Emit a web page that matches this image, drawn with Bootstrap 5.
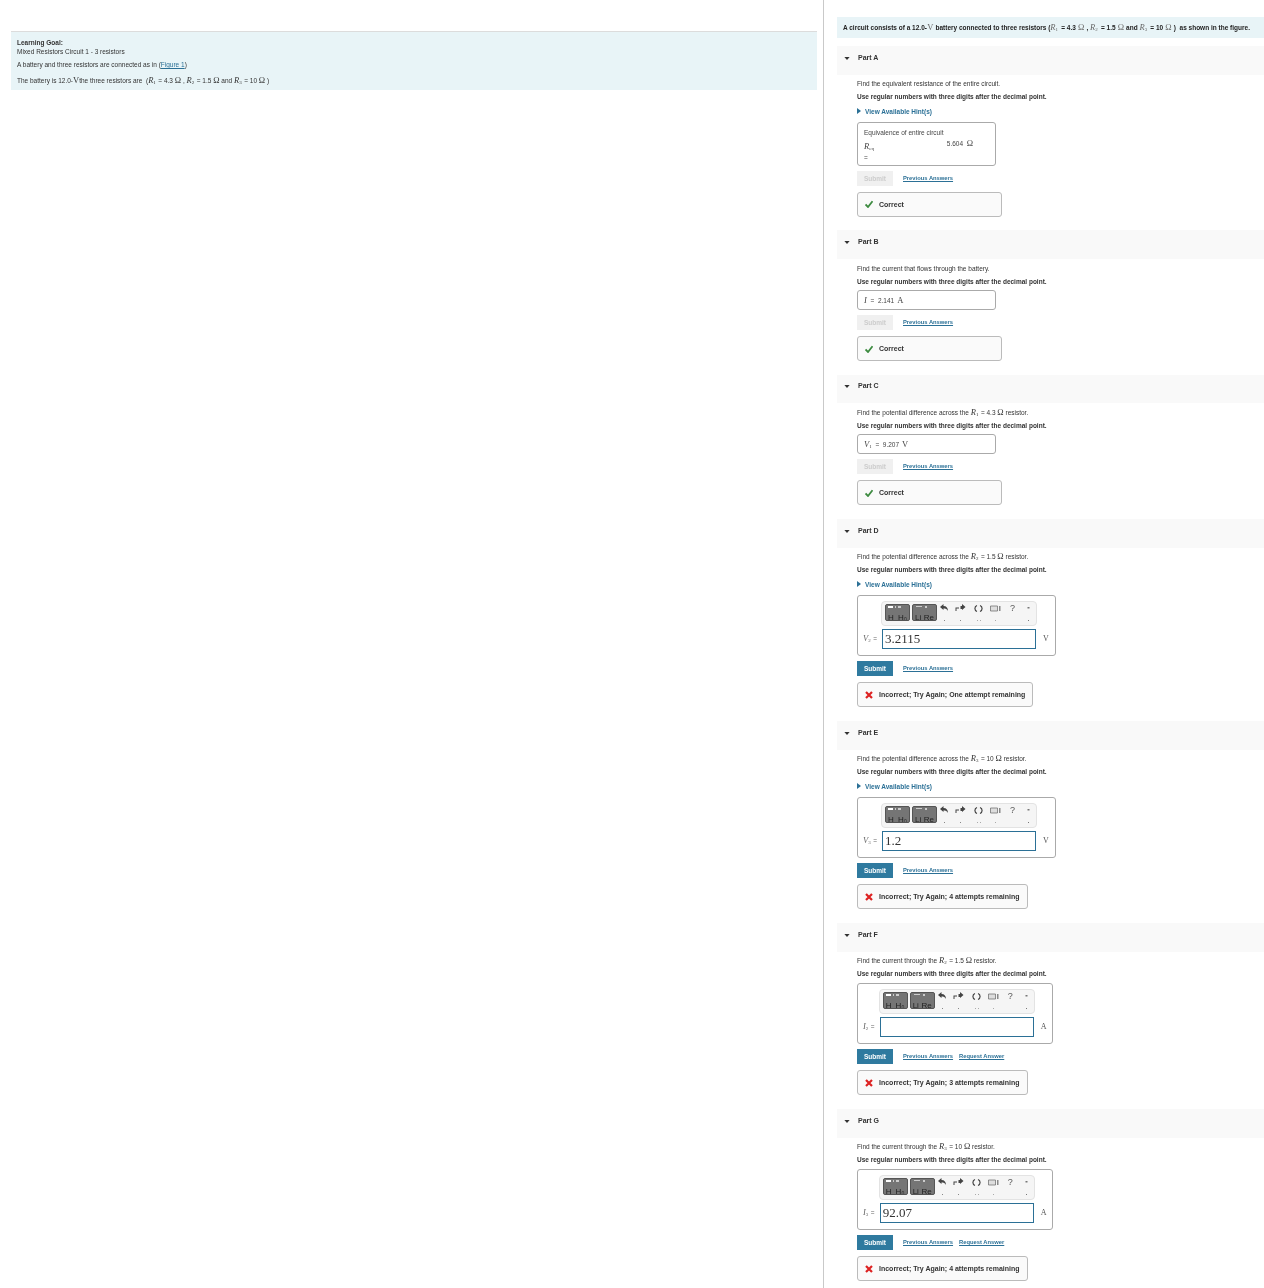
<!DOCTYPE html>
<html lang="en">
<head>
<meta charset="utf-8">
<title>Mixed Resistors Circuit</title>
<link href="https://cdn.jsdelivr.net/npm/bootstrap@5.3.0/dist/css/bootstrap.min.css" rel="stylesheet">
<style>
html,body{margin:0;background:#fff}
body{font-family:"Liberation Sans",Arial,sans-serif;font-size:6.5px;line-height:13px;color:#333;width:1264px;height:1288px;overflow:hidden}
.sheet{filter:blur(.3px);background:#fff}
.pane-left{width:824px;height:1288px;border-right:1px solid #c9c9c9;padding:31px 6px 0 11px;flex:none}
.goal{background:#e8f4f7;border-top:1px solid #dcdcdc;height:59px;padding:7px 6px 0}
.goal p{margin:0}
.goal .g1{line-height:8.500px}
.goal .g2{margin-top:5px;line-height:8px}
.goal .g3{margin-top:7px;line-height:8px}
.goal a,.hint-link,.prev-link{color:#2b7096}
.goal a{text-decoration:underline}
.mth{font-family:"Liberation Serif",serif;font-style:italic;font-size:8.500px;margin-right:.7px}
.mth sub{font-size:5px;font-style:normal;bottom:-.2em}
.rom{font-family:"Liberation Serif",serif;font-size:8.500px}
.pane-right{width:440px;padding:17px 0 0 13px;flex:none}
.intro{background:#e8f4f7;height:21px;line-height:21px;padding-left:6px;font-weight:700;color:#222;white-space:nowrap;margin-bottom:8px}
.intro .mth,.intro .rom{color:#666;font-weight:400}
.intro .mth{margin-right:1.400px}
.intro .rom{margin:0 .3px}
.part-bar{background:#f9f9f9;height:28.600px;padding:4.500px 0 0 7px;display:flex;align-items:flex-start;font-weight:700;color:#333;font-size:7px}
.part-bar svg{width:6px;height:3px;margin-top:6px;margin-right:8px;flex:none}
.part-body{padding:2.500px 0 13.800px 20px}
.part-body p{margin:0;height:13px;line-height:13px}
.hint-link{font-weight:700;display:flex;align-items:center;height:13px;margin-top:1.500px;gap:4px}
.hint-link svg{width:4px;height:6px}
.ans-box{border:1px solid #aaa;border-radius:3px;width:139px;margin-top:2.500px;padding:0 6px;color:#444}
.has-hint .ans-box,.has-hint .tool-box{margin-top:4.100px}
.ans-short{height:20px;display:flex;align-items:center;gap:3px}
.ans-tall{height:44px;padding-top:3px}
.ans-tall .row-tall{display:flex;justify-content:space-between;align-items:flex-start;padding-right:16px;margin-top:-2px}
.ans-tall .row-tall .mth{margin-top:3px}
.ans-tall .eq{margin-top:-2px}
.btn.sub-btn{--bs-btn-padding-x:0;--bs-btn-padding-y:0;--bs-btn-font-size:6.500px;--bs-btn-line-height:15px;--bs-btn-font-weight:700;--bs-btn-border-width:0;--bs-btn-border-radius:0;--bs-btn-bg:#2f7a9f;--bs-btn-color:#fff;--bs-btn-disabled-bg:#f0f0f0;--bs-btn-disabled-color:#ccc;--bs-btn-disabled-opacity:1;width:36px;height:15px}
.act{margin-top:5px;display:flex;align-items:center;height:15px;gap:10px}
.links{display:flex;gap:6px}
.prev-link{font-weight:700;font-size:5.800px;text-decoration:underline;text-underline-offset:1px}
.fb-wrap{margin-top:6px;display:flex}
.fb{display:flex;align-items:center;gap:6px;height:25px;border:1px solid #bbb;border-radius:3px;background:#fafafa;padding:0 7px;font-weight:700;font-size:7px;color:#333;min-width:145px}
.fb svg{width:8px;height:8px;flex:none}
.tool-box{display:grid;grid-template-columns:auto 154px auto;width:fit-content;border:1px solid #aaa;border-radius:3px;height:61.500px;padding:5px 6px 0 5px;column-gap:5px;align-items:center;margin-top:2.500px;align-content:start}
.toolbar{grid-column:2;background:#f5f5f5;border:1px solid #e3e3e3;border-radius:4px;height:25px;width:156px;margin-left:-1px;display:flex;align-items:flex-start;padding:2px 0 0 3px}
.tb-grp{width:25px;height:17px;border-radius:2px;background:#757575;border:1px solid #555;margin-right:2px;flex:none;overflow:hidden;display:flex;flex-direction:column;justify-content:space-between;padding:1px 1px 0}
.tb-grp svg{width:21px;height:2px;display:block;flex:none}
.tb-grp span{font-size:8px;line-height:6px;height:5px;color:#222;display:flex;justify-content:space-between;padding:0 1px}
.tb-ico{width:11px;height:18px;flex:none}
.lab{grid-column:1;grid-row:2;white-space:nowrap;color:#666;margin-top:3px}
.inp{grid-column:2;grid-row:2;border:1px solid #2b7096;height:20px;margin-top:3px;font-family:"Liberation Serif",serif;font-size:13px;line-height:17px;padding:0 2px;color:#333;width:154px}
.unit{grid-column:3;grid-row:2;font-family:"Liberation Serif",serif;font-size:8px;margin:3px 0 0 2px;color:#555}
.qm{font-size:9px;color:#555;line-height:9px;width:5px;flex:none}
.t2{margin-left:5px}.t3{margin-left:7px}.t4{margin-left:6px}.t5{margin-left:9px}.t6{margin-left:8px}
</style>
</head>
<body>
<svg width="0" height="0" class="position-absolute">
<defs>
<symbol id="caret" viewBox="0 0 7 4"><path d="M0 0h7L3.500 4z" fill="#333"/></symbol>
<symbol id="hintc" viewBox="0 0 4 6"><path d="M0 0l4 3-4 3z" fill="#2b7096"/></symbol>
<symbol id="ok" viewBox="0 0 8 8"><path d="M.5 4.500 3 7 7.500 1.200" fill="none" stroke="#3d8b40" stroke-width="1.800"/></symbol>
<symbol id="no" viewBox="0 0 8 8"><path d="M1 1l6 6M7 1L1 7" fill="none" stroke="#d22" stroke-width="2.200"/></symbol>
<symbol id="undo" viewBox="0 0 11 18"><path d="M1 3 4.500 0v2c3 0 4.500 2 4.500 5-1-2-2.500-2.500-4.500-2.500V6z" fill="#444"/><path d="M5 16h1v1H5z" fill="#888"/></symbol>
<symbol id="redo" viewBox="0 0 11 18"><path d="M10.500 3 7 0v2H5.500v3H7v1z" fill="#444"/><path d="M1.500 7V4.500H4V3.500H.5V7z" fill="#444"/><path d="M5 16h1v1H5z" fill="#888"/></symbol>
<symbol id="reset" viewBox="0 0 11 18"><path d="M4 1.500A3.200 3.200 0 0 0 4 7.500M7 1.500A3.200 3.200 0 0 1 7 7.500" fill="none" stroke="#444" stroke-width="1.200"/><path d="M4 16h1v1H4zM7 16h1v1H7z" fill="#aaa"/></symbol>
<symbol id="kbd" viewBox="0 0 11 18"><path d="M.5 2h7v5h-7z" fill="#ddd" stroke="#666" stroke-width=".7"/><path d="M9 2h1.500v5H9z" fill="#888"/><path d="M5 16h1v1H5z" fill="#aaa"/></symbol>
<symbol id="dot" viewBox="0 0 11 18"><path d="M4.500 3h2v1.500h-2zM5 16h1v1H5z" fill="#777"/></symbol>
<symbol id="topa" viewBox="0 0 21 2"><path d="M1 0h5v2H1z" fill="#fff"/><path d="M8 0h1v2H8zM11 0h3v2h-3z" fill="#ccc"/></symbol>
<symbol id="topb" viewBox="0 0 21 2"><path d="M2 0h6v1H2zM11 0h2v2h-2z" fill="#ccc"/></symbol>
</defs>
</svg>
<main class="d-flex sheet">
<section class="pane-left">
<div class="goal">
<p class="g1"><strong>Learning Goal:</strong><br>Mixed Resistors Circuit 1 - 3 resistors</p>
<p class="g2">A battery and three resistors are connected as in (<a href="#">Figure 1</a>)</p>
<p class="g3">The battery is 12.0-<span class="rom">V</span>the three resistors are &nbsp;(<span class="mth">R<sub>1</sub></span> = 4.3 <span class="rom">Ω</span> , <span class="mth">R<sub>2</sub></span> = 1.5 <span class="rom">Ω</span> and <span class="mth">R<sub>3</sub></span> = 10 <span class="rom">Ω</span> )</p>
</div>
</section>
<section class="pane-right">
<div class="intro">A circuit consists of a 12.0-<span class="rom">V</span> battery connected to three resistors (<span class="mth">R<sub>1</sub></span> = 4.3 <span class="rom">Ω</span> , <span class="mth">R<sub>2</sub></span> = 1.5 <span class="rom">Ω</span> and <span class="mth">R<sub>3</sub></span> = 10 <span class="rom">Ω</span> ) &nbsp;as shown in the figure.</div>

<div class="part-bar"><svg><use href="#caret"/></svg>Part A</div>
<div class="part-body has-hint">
<p>Find the equivalent resistance of the entire circuit.</p>
<p><strong>Use regular numbers with three digits after the decimal point.</strong></p>
<div class="hint-link"><svg><use href="#hintc"/></svg>View Available Hint(s)</div>
<div class="ans-box ans-tall">
<div>Equivalence of entire circuit</div>
<div class="row-tall"><span class="mth">R<sub>eq</sub></span><span>5.604 &nbsp;<span class="rom">Ω</span></span></div>
<div class="eq">=</div>
</div>
<div class="act"><button class="btn sub-btn" disabled>Submit</button><div class="links"><a class="prev-link" href="#">Previous Answers</a></div></div>
<div class="fb-wrap"><div class="fb"><svg><use href="#ok"/></svg>Correct</div></div>
</div>

<div class="part-bar"><svg><use href="#caret"/></svg>Part B</div>
<div class="part-body">
<p>Find the current that flows through the battery.</p>
<p><strong>Use regular numbers with three digits after the decimal point.</strong></p>
<div class="ans-box ans-short"><span class="mth">I</span> = &nbsp;2.141<span class="rom">A</span></div>
<div class="act"><button class="btn sub-btn" disabled>Submit</button><div class="links"><a class="prev-link" href="#">Previous Answers</a></div></div>
<div class="fb-wrap"><div class="fb"><svg><use href="#ok"/></svg>Correct</div></div>
</div>

<div class="part-bar"><svg><use href="#caret"/></svg>Part C</div>
<div class="part-body">
<p>Find the potential difference across the <span class="mth">R<sub>1</sub></span> = 4.3 <span class="rom">Ω</span> resistor.</p>
<p><strong>Use regular numbers with three digits after the decimal point.</strong></p>
<div class="ans-box ans-short"><span class="mth">V<sub>1</sub></span> = &nbsp;9.207<span class="rom">V</span></div>
<div class="act"><button class="btn sub-btn" disabled>Submit</button><div class="links"><a class="prev-link" href="#">Previous Answers</a></div></div>
<div class="fb-wrap"><div class="fb"><svg><use href="#ok"/></svg>Correct</div></div>
</div>

<div class="part-bar"><svg><use href="#caret"/></svg>Part D</div>
<div class="part-body has-hint">
<p>Find the potential difference across the <span class="mth">R<sub>2</sub></span> = 1.5 <span class="rom">Ω</span> resistor.</p>
<p><strong>Use regular numbers with three digits after the decimal point.</strong></p>
<div class="hint-link"><svg><use href="#hintc"/></svg>View Available Hint(s)</div>
<div class="tool-box">
<div class="toolbar"><div class="tb-grp"><svg><use href="#topa"/></svg><span><i class="fst-normal">H</i><i class="fst-normal">H₀</i></span></div><div class="tb-grp"><svg><use href="#topb"/></svg><span><i class="fst-normal">Li</i><i class="fst-normal">Re</i></span></div><svg class="tb-ico"><use href="#undo"/></svg><svg class="tb-ico t2"><use href="#redo"/></svg><svg class="tb-ico t3"><use href="#reset"/></svg><svg class="tb-ico t4"><use href="#kbd"/></svg><span class="qm t5">?</span><svg class="tb-ico t6"><use href="#dot"/></svg></div>
<div class="lab"><span class="mth">V<sub>2</sub></span> =</div><div class="inp">3.2115</div><div class="unit">V</div>
</div>
<div class="act"><button class="btn sub-btn">Submit</button><div class="links"><a class="prev-link" href="#">Previous Answers</a></div></div>
<div class="fb-wrap"><div class="fb"><svg><use href="#no"/></svg>Incorrect; Try Again; One attempt remaining</div></div>
</div>

<div class="part-bar"><svg><use href="#caret"/></svg>Part E</div>
<div class="part-body has-hint">
<p>Find the potential difference across the <span class="mth">R<sub>3</sub></span> = 10 <span class="rom">Ω</span> resistor.</p>
<p><strong>Use regular numbers with three digits after the decimal point.</strong></p>
<div class="hint-link"><svg><use href="#hintc"/></svg>View Available Hint(s)</div>
<div class="tool-box">
<div class="toolbar"><div class="tb-grp"><svg><use href="#topa"/></svg><span><i class="fst-normal">H</i><i class="fst-normal">H₀</i></span></div><div class="tb-grp"><svg><use href="#topb"/></svg><span><i class="fst-normal">Li</i><i class="fst-normal">Re</i></span></div><svg class="tb-ico"><use href="#undo"/></svg><svg class="tb-ico t2"><use href="#redo"/></svg><svg class="tb-ico t3"><use href="#reset"/></svg><svg class="tb-ico t4"><use href="#kbd"/></svg><span class="qm t5">?</span><svg class="tb-ico t6"><use href="#dot"/></svg></div>
<div class="lab"><span class="mth">V<sub>3</sub></span> =</div><div class="inp">1.2</div><div class="unit">V</div>
</div>
<div class="act"><button class="btn sub-btn">Submit</button><div class="links"><a class="prev-link" href="#">Previous Answers</a></div></div>
<div class="fb-wrap"><div class="fb"><svg><use href="#no"/></svg>Incorrect; Try Again; 4 attempts remaining</div></div>
</div>

<div class="part-bar"><svg><use href="#caret"/></svg>Part F</div>
<div class="part-body">
<p>Find the current through the <span class="mth">R<sub>2</sub></span> = 1.5 <span class="rom">Ω</span> resistor.</p>
<p><strong>Use regular numbers with three digits after the decimal point.</strong></p>
<div class="tool-box">
<div class="toolbar"><div class="tb-grp"><svg><use href="#topa"/></svg><span><i class="fst-normal">H</i><i class="fst-normal">H₀</i></span></div><div class="tb-grp"><svg><use href="#topb"/></svg><span><i class="fst-normal">Li</i><i class="fst-normal">Re</i></span></div><svg class="tb-ico"><use href="#undo"/></svg><svg class="tb-ico t2"><use href="#redo"/></svg><svg class="tb-ico t3"><use href="#reset"/></svg><svg class="tb-ico t4"><use href="#kbd"/></svg><span class="qm t5">?</span><svg class="tb-ico t6"><use href="#dot"/></svg></div>
<div class="lab"><span class="mth">I<sub>2</sub></span> =</div><div class="inp"></div><div class="unit">A</div>
</div>
<div class="act"><button class="btn sub-btn">Submit</button><div class="links"><a class="prev-link" href="#">Previous Answers</a><a class="prev-link" href="#">Request Answer</a></div></div>
<div class="fb-wrap"><div class="fb"><svg><use href="#no"/></svg>Incorrect; Try Again; 3 attempts remaining</div></div>
</div>

<div class="part-bar"><svg><use href="#caret"/></svg>Part G</div>
<div class="part-body">
<p>Find the current through the <span class="mth">R<sub>3</sub></span> = 10 <span class="rom">Ω</span> resistor.</p>
<p><strong>Use regular numbers with three digits after the decimal point.</strong></p>
<div class="tool-box">
<div class="toolbar"><div class="tb-grp"><svg><use href="#topa"/></svg><span><i class="fst-normal">H</i><i class="fst-normal">H₀</i></span></div><div class="tb-grp"><svg><use href="#topb"/></svg><span><i class="fst-normal">Li</i><i class="fst-normal">Re</i></span></div><svg class="tb-ico"><use href="#undo"/></svg><svg class="tb-ico t2"><use href="#redo"/></svg><svg class="tb-ico t3"><use href="#reset"/></svg><svg class="tb-ico t4"><use href="#kbd"/></svg><span class="qm t5">?</span><svg class="tb-ico t6"><use href="#dot"/></svg></div>
<div class="lab"><span class="mth">I<sub>3</sub></span> =</div><div class="inp">92.07</div><div class="unit">A</div>
</div>
<div class="act"><button class="btn sub-btn">Submit</button><div class="links"><a class="prev-link" href="#">Previous Answers</a><a class="prev-link" href="#">Request Answer</a></div></div>
<div class="fb-wrap"><div class="fb"><svg><use href="#no"/></svg>Incorrect; Try Again; 4 attempts remaining</div></div>
</div>
</section>
</main>
<script src="https://cdn.jsdelivr.net/npm/bootstrap@5.3.0/dist/js/bootstrap.bundle.min.js"></script>
</body>
</html>
